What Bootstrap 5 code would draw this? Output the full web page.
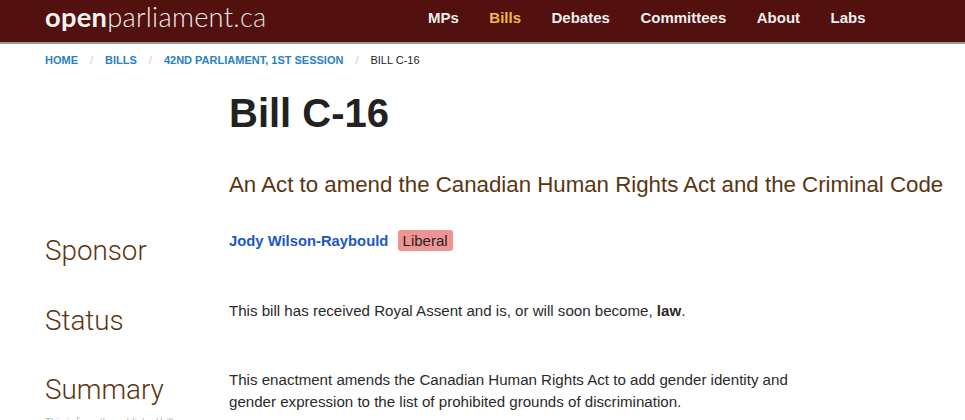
<!DOCTYPE html>
<html lang="en"><head><meta charset="utf-8"><title>Bill C-16</title>
<link href="https://cdn.jsdelivr.net/npm/bootstrap@5.3.0/dist/css/bootstrap.min.css" rel="stylesheet">
<style>
html,body{height:420px;overflow:hidden}
body{font-family:"Liberation Sans",Arial,sans-serif;color:#2a2a2a;background:#fff;font-size:15.1px;line-height:22px}
.topbar{height:44px;background:#52100e;border-bottom:2px solid #999;padding-left:45px;overflow:hidden}
.brandmark{font-family:Lato,sans-serif;font-size:27.3px;line-height:36px;color:#eee;font-weight:300;text-decoration:none;margin-top:-1px;width:383px;letter-spacing:.25px}
.brandmark b{font-weight:700;color:#f2f2f2}
.brandmark span{color:#ddd}
.mainnav{gap:30.5px;margin-top:7px}
.mainnav a{font-size:15px;font-weight:700;line-height:21px;color:#eee;text-decoration:none}
.mainnav a.here{color:#f0b84a}
.crumbs{padding:7px 0 0 45px;font-size:11px;line-height:18px;height:36px;color:#222}
.crumbs a{font-weight:700;color:#2b7fc2;text-decoration:none}
.crumbs i{font-style:normal;color:#ccc;margin:0 12px}
.billsheet{padding-left:45px;padding-right:0}
.sidelabel{width:184px;flex:none;font-family:Roboto,"Liberation Sans",sans-serif;font-weight:300;font-size:27.8px;line-height:34px;color:#5a3510;margin:0}
.billtitle{font-size:40px;font-weight:700;line-height:46px;margin:10px 0 0;color:#222}
.billsub{font-size:22.27px;font-weight:400;line-height:28px;color:#5a3510;margin:35px 0 0}
.rowsponsor{margin-top:31px;height:70px}
.rowstatus{height:69px}
.sidelabel.shifted{padding-top:4px}
.sponsorlink{font-weight:700;color:#1d57c4;text-decoration:none;font-size:14.8px}
.partytag{display:inline-block;background:#ef9494;color:#222;border-radius:3px;padding:0 5px;margin-left:5px;line-height:21px;font-size:15px}
.fineprint{font-size:10px;color:#888;line-height:14px;margin:9px 0 0;white-space:nowrap}
.bodycopy{margin:0;width:600px}
</style></head>
<body>
<header class="topbar d-flex">
  <a class="brandmark d-block" href="#"><b>open</b>parliament<span>.ca</span></a>
  <nav class="mainnav d-flex"><a href="#">MPs</a><a class="here" href="#">Bills</a><a href="#">Debates</a><a href="#">Committees</a><a href="#">About</a><a href="#">Labs</a></nav>
</header>
<div class="crumbs"><a href="#">HOME</a><i>/</i><a href="#">BILLS</a><i>/</i><a href="#">42ND PARLIAMENT, 1ST SESSION</a><i>/</i>BILL C-16</div>
<main class="billsheet">
  <div class="d-flex"><div class="sidelabel"></div><div><h1 class="billtitle">Bill C-16</h1><h2 class="billsub">An Act to amend the Canadian Human Rights Act and the Criminal Code</h2></div></div>
  <div class="d-flex rowsponsor"><h3 class="sidelabel shifted">Sponsor</h3><div><a class="sponsorlink" href="#">Jody Wilson-Raybould</a> <span class="partytag">Liberal</span></div></div>
  <div class="d-flex rowstatus"><h3 class="sidelabel shifted">Status</h3><p class="bodycopy">This bill has received Royal Assent and is, or will soon become, <strong>law</strong>.</p></div>
  <div class="d-flex"><div class="sidelabel"><h3 class="sidelabel shifted">Summary</h3><p class="fineprint">This is from the published bill.</p></div><p class="bodycopy">This enactment amends the Canadian Human Rights Act to add gender identity and gender expression to the list of prohibited grounds of discrimination.</p></div>
</main>
<script src="https://cdn.jsdelivr.net/npm/bootstrap@5.3.0/dist/js/bootstrap.bundle.min.js"></script>
</body></html>
